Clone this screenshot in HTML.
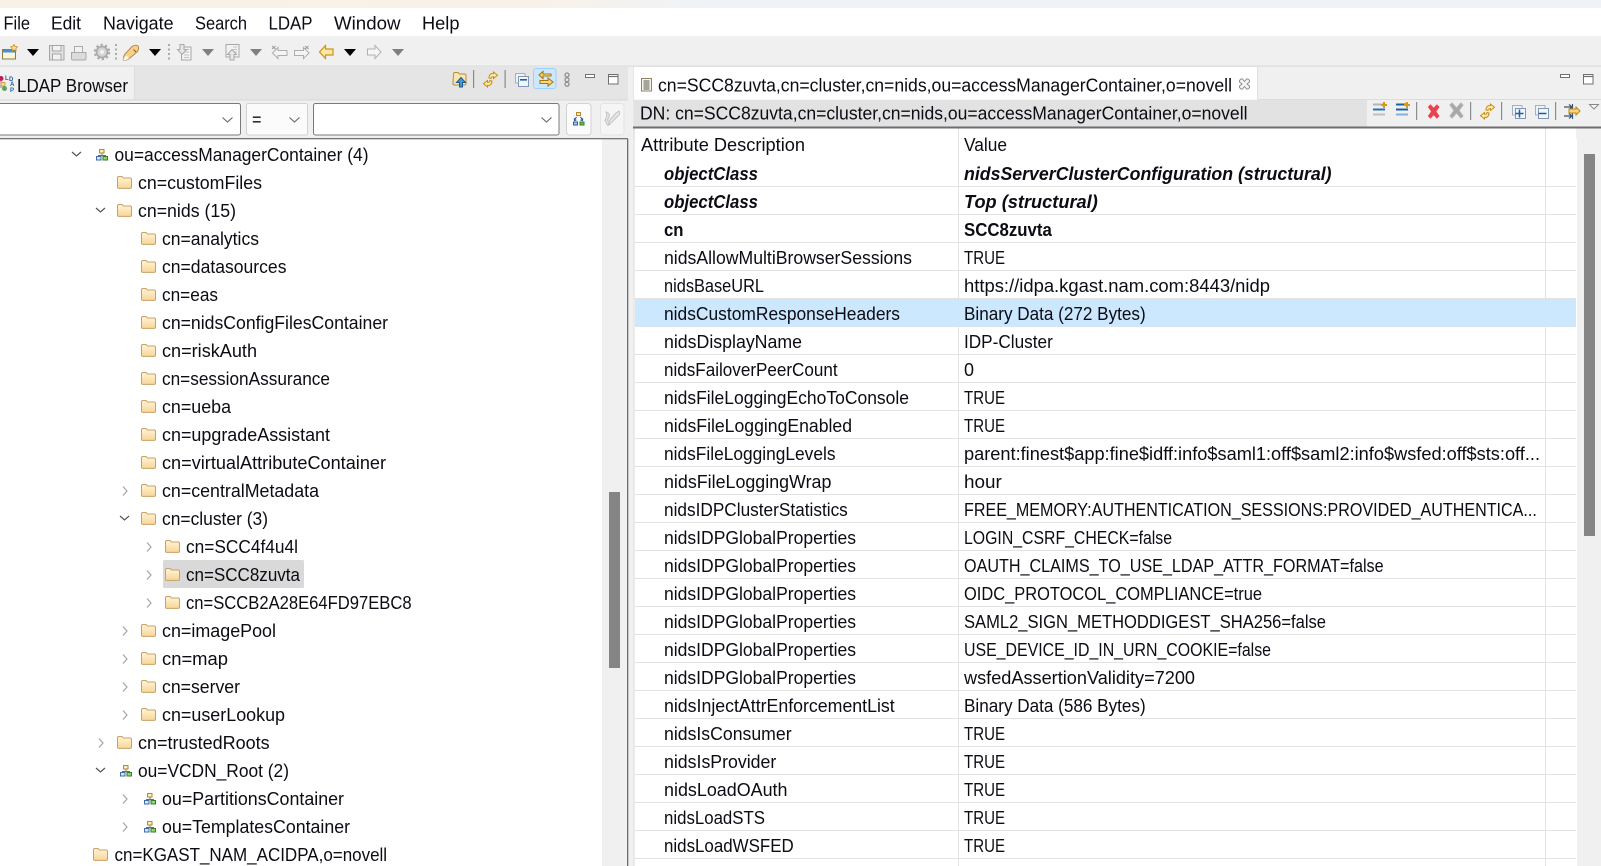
<!DOCTYPE html>
<html lang="en">
<head>
<meta charset="utf-8">
<title>LDAP Browser</title>
<style>
html,body{margin:0;padding:0;width:1601px;height:866px;overflow:hidden;background:#fff}
svg{display:block}
text{font-family:"Liberation Sans",sans-serif;font-size:18.5px;fill:#0c0c14;white-space:pre}
.b{font-weight:bold}
.bi{font-weight:bold;font-style:italic}
</style>
</head>
<body>
<svg xmlns="http://www.w3.org/2000/svg" width="1601" height="866" viewBox="0 0 1601 866">
<defs>
<linearGradient id="tg" x1="0" x2="1" y1="0" y2="0"><stop offset="0" stop-color="#faf1e6"/><stop offset=".33" stop-color="#f9f1e7"/><stop offset=".44" stop-color="#eff3f7"/><stop offset="1" stop-color="#eff3f7"/></linearGradient>
<linearGradient id="fg" x1="0" x2="0" y1="0" y2="1"><stop offset="0" stop-color="#fff6da"/><stop offset="1" stop-color="#f8d495"/></linearGradient>
<symbol id="f" width="15" height="13" viewBox="0 0 15 13" overflow="visible"><path d="M.5 2C.5 1 1 .5 1.800 .5H5l1.300 1.500h6.800c.8 0 1.400.6 1.400 1.400v7.700c0 .8-.6 1.300-1.400 1.300H1.900c-.8 0-1.400-.5-1.400-1.300z" fill="url(#fg)" stroke="#c9a066"/></symbol>
<symbol id="o" width="12" height="12" viewBox="0 0 12 12" overflow="visible"><path d="M6 4v2.500M2.500 8V6.500h7V8" fill="none" stroke="#6b6b6b"/><rect x="3.500" y=".5" width="4.500" height="3.500" fill="#fdf0c0" stroke="#b8862e"/><rect x=".5" y="7.500" width="4.500" height="3.500" fill="#dbe7f7" stroke="#3f6aa8"/><rect x="7" y="7.500" width="4.500" height="3.500" fill="#9ad468" stroke="#2f7f30"/></symbol>
<symbol id="cd" width="12" height="8" viewBox="0 0 12 8" overflow="visible"><path d="M1.500 2 6 6l4.500-4" fill="none" stroke="#555" stroke-width="1.200"/></symbol>
<symbol id="cr" width="8" height="12" viewBox="0 0 8 12" overflow="visible"><path d="M2 1.500 6 6l-4 4.500" fill="none" stroke="#a6a6a6" stroke-width="1.200"/></symbol>
<symbol id="cc" width="13" height="8" viewBox="0 0 13 8" overflow="visible"><path d="M1.500 1.500 6.500 6l5-4.500" fill="none" stroke="#666" stroke-width="1.100"/></symbol>
<symbol id="tb" width="12" height="7" viewBox="0 0 12 7"><path d="M0 0h12L6 7z" fill="#000"/></symbol>
<symbol id="tgy" width="12" height="7" viewBox="0 0 12 7"><path d="M0 0h12L6 7z" fill="#7f7f7f"/></symbol>
<symbol id="rf" width="16" height="16" viewBox="0 0 16 16" overflow="visible"><path d="M6.500 6.500C6.500 3 9 1.500 11 2V.5l4 3.300-4 3.200V5.300c-1.500-.3-2.300.3-2.500 1.700zM9.500 9.500C9.500 13 7 14.500 5 14v1.500L1 12.200 5 9v1.700c1.500.3 2.300-.3 2.500-1.700z" fill="#fde9a8" stroke="#c98c12"/></symbol>
<symbol id="ab" width="14" height="14" viewBox="0 0 14 14" overflow="visible"><rect x=".5" y=".5" width="9.500" height="9.500" fill="#eef3fa" stroke="#9fb2cc"/><rect x="3.500" y="3.500" width="10" height="10" fill="#f3f7fc" stroke="#7d97b8"/></symbol>
</defs>

<!-- backgrounds -->
<rect width="1601" height="8" fill="url(#tg)"/>
<rect y="8" width="1601" height="28" fill="#fff"/>
<rect y="36" width="1601" height="30" fill="#f0f0f0"/>
<rect y="66" width="1601" height="73" fill="#f0f0f0"/>
<rect y="65.500" width="1601" height="1.200" fill="#dcdcdc"/>
<!-- left view header -->
<rect x="134" y="67" width="494" height="33" fill="#e5e5e5"/>
<rect x="134" y="67" width="1" height="33" fill="#dcdcdc"/>
<rect y="99.500" width="628" height="1" fill="#d6d6d6"/>
<!-- combos -->
<rect x="-3" y="103.500" width="243.500" height="31.500" rx="2" fill="#fff" stroke="#7a7a7a"/>
<rect x="246.500" y="103.500" width="61" height="31.500" rx="2" fill="#fbfbfb" stroke="#d2d2d2"/>
<rect x="313.500" y="103.500" width="245.500" height="31.500" rx="2" fill="#fff" stroke="#7a7a7a"/>
<rect x="566.500" y="103.500" width="24.500" height="31.500" rx="3" fill="#fbfbfb" stroke="#d2d2d2"/>
<rect x="600.500" y="103.500" width="23.500" height="31.500" rx="3" fill="#f5f5f5" stroke="#e4e4e4"/>
<use href="#cc" x="221" y="116"/><use href="#cc" x="288" y="116"/><use href="#cc" x="540" y="116"/>
<text x="252" y="125.500" textLength="9.500" lengthAdjust="spacingAndGlyphs">=</text>
<!-- tree area -->
<rect y="138" width="628" height="1.400" fill="#777"/>
<rect y="139.400" width="602" height="727" fill="#fff"/>
<rect x="602" y="139.400" width="25" height="727" fill="#f0f0f0"/>
<rect x="609" y="492" width="11" height="176" fill="#858585"/>
<rect x="627" y="139" width="1.400" height="727" fill="#6e6e6e"/>
<rect x="628.400" y="139" width="5" height="727" fill="#f0f0f0"/>
<rect x="163" y="560" width="141" height="28" rx="1.500" fill="#d9d9d9"/>

<!-- menu -->
<text x="3.500" y="29.500" textLength="26.500" lengthAdjust="spacingAndGlyphs">File</text>
<text x="51" y="29.500" textLength="30" lengthAdjust="spacingAndGlyphs">Edit</text>
<text x="103" y="29.500" textLength="70.500" lengthAdjust="spacingAndGlyphs">Navigate</text>
<text x="195" y="29.500" textLength="52" lengthAdjust="spacingAndGlyphs">Search</text>
<text x="268.500" y="29.500" textLength="44" lengthAdjust="spacingAndGlyphs">LDAP</text>
<text x="334" y="29.500" textLength="66.500" lengthAdjust="spacingAndGlyphs">Window</text>
<text x="422" y="29.500" textLength="37.500" lengthAdjust="spacingAndGlyphs">Help</text>

<!-- main toolbar -->
<path d="M2.500 49.500h13v9.500h-13z" fill="#fbf7d8" stroke="#8a7a50"/><rect x="3" y="50" width="12" height="2.500" fill="#4a90d9"/><path d="M14 44.500l1.200 2 2.300.3-1.600 1.700.3 2.300-2.200-1-2.100 1 .3-2.300-1.600-1.700 2.300-.3z" fill="#fce28a" stroke="#c8901a" stroke-width=".8"/>
<use href="#tb" x="27" y="49"/>
<g fill="#e2e2e2" stroke="#a6a6a6"><path d="M49.500 45.500h14.500v14.500h-14.500z"/><path d="M52.500 45.500h8.500v5.500h-8.500zM52.500 54h8.500v6h-8.500z" fill="#f2f2f2"/></g>
<g fill="#dcdcdc" stroke="#aaa"><path d="M74.500 46.500h8v6h-8z" fill="#f2f2f2"/><path d="M71.500 52.500h14.500v6c0 1-.6 1.500-1.500 1.500h-11.500c-1 0-1.500-.5-1.500-1.500z"/></g>
<circle cx="102" cy="52" r="5.500" fill="#d4d4d4" stroke="#a8a8a8" stroke-width="1.600"/><circle cx="102" cy="52" r="7.200" fill="none" stroke="#a8a8a8" stroke-width="2" stroke-dasharray="2.300 2.300"/><circle cx="102" cy="52" r="2.200" fill="#f0f0f0"/>
<path d="M116 44v16" stroke="#999" stroke-width="1.600" stroke-dasharray="2 2.500"/>
<path d="M123.500 60.500c-.5-3 .5-5.500 2.500-7.500l6-6.500c2-1.500 4.500-1.500 6-.5 1 2 .5 4-.5 5.500l-7 6c-2 2-4.500 3-7 3z" fill="#f8d08a" stroke="#b08a50"/><path d="M123.500 60.500c0-2.500 1-4 3-5l2.500 2.500c-1.500 1.500-3 2.500-5.500 2.500z" fill="#fffbe6" stroke="#e8dcc0" stroke-width=".6"/><path d="M133.500 49.500l2.500 2.500" stroke="#8a5a1a"/>
<use href="#tb" x="149" y="49"/>
<path d="M169 44v16" stroke="#999" stroke-width="1.600" stroke-dasharray="2 2.500"/>
<path d="M181.500 47h9.500v13h-9.500z" fill="#f2f2f2" stroke="#a8a8a8"/><path d="M183 49.500h6M183 52h6M184 55h5M184 57.500h5" stroke="#c4c4c4"/><path d="M180 44.500h4v5h2.500l-4.500 5-4.500-5h2.500z" fill="#e8e8e8" stroke="#a8a8a8"/>
<use href="#tgy" x="202" y="49"/>
<path d="M226 44.500h13v12.500h-13z" fill="#f2f2f2" stroke="#a8a8a8"/><path d="M233 47h4M233 49.500h4M233 52h4" stroke="#c4c4c4"/><path d="M230 60v-5.500h-2.500l4.500-5 4.500 5h-2.500v5.500z" fill="#e8e8e8" stroke="#a8a8a8"/>
<use href="#tgy" x="250" y="49"/>
<path d="M287 50.500h-9v-3l-5.500 5.500 5.500 5.500v-3h9z" fill="#f4f4f4" stroke="#adadad"/><path d="M272 46l3.500 3M275.500 46l-3.500 3" stroke="#999"/>
<path d="M294.500 50.500h9v-3l5.500 5.500-5.500 5.500v-3h-9z" fill="#f4f4f4" stroke="#adadad"/><path d="M305 46l3.500 3M308.500 46l-3.500 3" stroke="#999"/>
<path d="M333 49h-7.500v-3.500l-6 6.500 6 6.500v-3.500h7.500z" fill="#fde9a6" stroke="#cf8f1a" stroke-width="1.200"/>
<use href="#tb" x="344" y="49"/>
<path d="M367.500 49h7.500v-3.500l6 6.500-6 6.500v-3.500h-7.500z" fill="#f6f6f6" stroke="#b0b0b0"/>
<use href="#tgy" x="392" y="49"/>

<!-- left tab -->
<g>
<circle cx="1" cy="78.500" r="2.500" fill="#c2185b"/><path d="M1 81v7M1 84.500h4" stroke="#888"/><rect x="1" y="82.500" width="4" height="3.500" fill="#fde08a" stroke="#b8862e" stroke-width=".7"/><circle cx="4.500" cy="88.500" r="2.500" fill="#5aa55a"/>
<text x="5" y="80" style="font-size:6px;font-weight:bold;fill:#1d5fa8">L</text><text x="9" y="81" style="font-size:6px;font-weight:bold;fill:#1d5fa8">D</text><text x="10" y="86" style="font-size:6px;font-weight:bold;fill:#1d5fa8">A</text><text x="10" y="92" style="font-size:6px;font-weight:bold;fill:#1d5fa8">P</text>
</g>
<text x="17" y="92" textLength="111" lengthAdjust="spacingAndGlyphs">LDAP Browser</text>

<!-- left view icons -->
<path d="M453.500 74c0-1 .5-1.500 1.500-1.500h3l1.500 1.500h5c1 0 1.500.5 1.500 1.500v8c0 1-.5 1.500-1.500 1.500h-10c-1 0-1.500-.5-1.500-1.500z" fill="#fbe4b0" stroke="#b88a3e"/><path d="M459.500 87v-4.500h-3l4.500-5 4.500 5h-3V87z" fill="#3f9ad6" stroke="#165c8f"/>
<rect x="473" y="70" width="1.200" height="18" fill="#8c8c8c"/>
<use href="#rf" x="482.500" y="71.500"/>
<rect x="504.500" y="70" width="1.200" height="18" fill="#8c8c8c"/>
<use href="#ab" x="515" y="73"/><path d="M520 79.800h7" stroke="#1f5f9e" stroke-width="1.600"/>
<rect x="533.500" y="68.500" width="22.500" height="20" rx="2.500" fill="#cce8ff" stroke="#99d1ff"/>
<path d="M551 74h-8v-2.500l-4 3.500 4 3.500v-2.500h8zM540 80.500h8v-2.500l5 4-5 4v-2.500h-8z" fill="#fdd97c" stroke="#a9770f" stroke-width="1.100"/>
<g fill="none" stroke="#8f8f8f" stroke-width="1.300"><circle cx="567" cy="75" r="2"/><circle cx="567" cy="79.700" r="2"/><circle cx="567" cy="84.200" r="2"/></g>
<rect x="585.500" y="74.500" width="9" height="3" fill="#fff" stroke="#707070"/>
<rect x="608.500" y="74.500" width="9.500" height="9.500" fill="#fff" stroke="#707070"/><path d="M608.500 76.500h9.500" stroke="#707070" stroke-width="1.200"/>
<!-- filter buttons -->
<g transform="translate(573,112)"><rect x="3.500" y=".5" width="4" height="3" fill="#fde8a0" stroke="#b8862e"/><rect x=".5" y="10" width="4" height="3" fill="#a9c8ec" stroke="#2f5f9e"/><rect x="7" y="10" width="4" height="3" fill="#6fc04a" stroke="#2f7f30"/><path d="M3.500 5 1.500 8M1.300 6.300 1.500 8.500 3.500 8M7.500 5 9.500 8M9.700 6.300 9.500 8.500 7.500 8" fill="none" stroke="#1f4f8e"/></g>
<g transform="translate(603,110)" fill="#e6e6e6" stroke="#c4c4c4"><path d="M3 2c2 0 3.500 2 3.500 4L4.500 10 7 14.500 4.500 15 2 10.500 4 6z"/><path d="M16 1c1 1.500 1 3-.5 4.500L9 12 5.500 15l1-4.500 6-7z"/></g>

<!-- right view -->
<rect x="633.400" y="66" width="1.200" height="800" fill="#e0e0e0"/>
<rect x="634" y="67" width="623" height="32.500" fill="#fff"/>
<rect x="1257" y="67" width="1" height="32.500" fill="#e0e0e0"/>
<rect x="1258" y="99" width="343" height="1" fill="#dcdcdc"/>
<path d="M641.500 78.500h10v12.500h-10z" fill="#f8f5e8" stroke="#8f8566"/><path d="M643.500 81h6M643.500 83h6M643.500 85h6M643.500 87h6M643.500 89h6" stroke="#555" stroke-width=".9"/>
<text x="658" y="91.500" textLength="574" lengthAdjust="spacingAndGlyphs">cn=SCC8zuvta,cn=cluster,cn=nids,ou=accessManagerContainer,o=novell</text>
<path d="M1239.500 80.500l1.500-1.500h1.500l2 2.500 2-2.500h1.500l1.500 1.500v1.500l-2.500 2 2.500 2v1.500l-1.500 1.500h-1.500l-2-2.500-2 2.500H1241l-1.500-1.500v-1.500l2.500-2-2.500-2z" fill="#f4f4f4" stroke="#8f8f8f"/>
<rect x="1560.500" y="74.500" width="9" height="3" fill="#fff" stroke="#707070"/>
<rect x="1583.500" y="74.500" width="9.500" height="9.500" fill="#fff" stroke="#707070"/><path d="M1583.500 76.500h9.500" stroke="#707070" stroke-width="1.200"/>

<rect x="634" y="100" width="733" height="27" fill="#e2e2e2"/>
<text x="640" y="119.500" textLength="607.500" lengthAdjust="spacingAndGlyphs">DN: cn=SCC8zuvta,cn=cluster,cn=nids,ou=accessManagerContainer,o=novell</text>
<rect x="633" y="126.500" width="968" height="2" fill="#6e6e6e"/>

<!-- DN toolbar -->
<g stroke-width="2"><path d="M1373 104.500h12" stroke="#b4b4b4"/><path d="M1373 109.500h12" stroke="#2a6fb0"/><path d="M1373 114.500h12" stroke="#c0c0c0"/></g>
<path d="M1384 102v6M1381 105h6" stroke="#d69a1a" stroke-width="2"/>
<g stroke-width="2"><path d="M1396 104.500h12M1396 109.500h12" stroke="#1f5f9e"/><path d="M1396 114.500h12" stroke="#7fb2dd"/></g>
<path d="M1407 102v6M1404 105h6" stroke="#d69a1a" stroke-width="2"/>
<rect x="1416" y="102" width="1.200" height="18" fill="#8c8c8c"/>
<path d="M1428.500 107l2-2 3.200 3.500 3.200-3.500 2 2-3.200 4.500 3.200 4.500-2 2-3.200-3.500-3.200 3.500-2-2 3.200-4.500z" fill="#e8434f" stroke="#e8434f"/>
<path d="M1450 105l2-2 4.500 5 4.500-5 2 2-4 5.500 4 5.500-2 2-4.500-5-4.500 5-2-2 4-5.500z" fill="#a8a8a8" stroke="#b4b4b4"/>
<rect x="1470" y="102" width="1.200" height="18" fill="#8c8c8c"/>
<use href="#rf" x="1479.500" y="103.500"/>
<rect x="1501" y="102" width="1.200" height="18" fill="#8c8c8c"/>
<use href="#ab" x="1512" y="105"/><path d="M1519.500 109.500v8M1515.500 113.500h8" stroke="#1f5f9e" stroke-width="1.500"/>
<use href="#ab" x="1535" y="105"/><path d="M1538.500 113.500h8" stroke="#1f5f9e" stroke-width="1.500"/>
<rect x="1555" y="102" width="1.200" height="18" fill="#8c8c8c"/>
<path d="M1564 107h8M1569 104.500l3 2.500-3 2.500M1572.500 104v6M1564 116h8M1569 113.500l3 2.500-3 2.500M1572.500 113v6" stroke="#3a5576" stroke-width="1.200" fill="none"/>
<path d="M1569 109h7v-2l4 4-4 4v-2h-7z" fill="#fcd676" stroke="#b8861a"/>
<path d="M1589.500 104.500h9l-4.500 4.500z" fill="#fff" stroke="#888"/>

<!-- table -->
<rect x="635" y="128.500" width="941" height="738" fill="#fff"/>
<rect x="1577" y="128.500" width="24" height="738" fill="#f0f0f0"/>
<rect x="1584" y="154" width="11" height="382" fill="#858585"/>
<g fill="#e3e3e3">
<rect x="635" y="186" width="941" height="1"/><rect x="635" y="214" width="941" height="1"/><rect x="635" y="242" width="941" height="1"/><rect x="635" y="270" width="941" height="1"/><rect x="635" y="298" width="941" height="1"/><rect x="635" y="326" width="941" height="1"/><rect x="635" y="354" width="941" height="1"/><rect x="635" y="382" width="941" height="1"/><rect x="635" y="410" width="941" height="1"/><rect x="635" y="438" width="941" height="1"/><rect x="635" y="466" width="941" height="1"/><rect x="635" y="494" width="941" height="1"/><rect x="635" y="522" width="941" height="1"/><rect x="635" y="550" width="941" height="1"/><rect x="635" y="578" width="941" height="1"/><rect x="635" y="606" width="941" height="1"/><rect x="635" y="634" width="941" height="1"/><rect x="635" y="662" width="941" height="1"/><rect x="635" y="690" width="941" height="1"/><rect x="635" y="718" width="941" height="1"/><rect x="635" y="746" width="941" height="1"/><rect x="635" y="774" width="941" height="1"/><rect x="635" y="802" width="941" height="1"/><rect x="635" y="830" width="941" height="1"/><rect x="635" y="858" width="941" height="1"/>
<rect x="958" y="128.500" width="1" height="738"/><rect x="1545" y="128.500" width="1" height="738"/>
</g>
<rect x="635" y="299" width="941" height="27.500" fill="#cce8ff"/>

<text x="641" y="151" textLength="164" lengthAdjust="spacingAndGlyphs">Attribute Description</text>
<text x="964" y="151" textLength="43" lengthAdjust="spacingAndGlyphs">Value</text>

<text class="bi" x="664" y="180" textLength="94" lengthAdjust="spacingAndGlyphs">objectClass</text>
<text class="bi" x="664" y="208" textLength="94" lengthAdjust="spacingAndGlyphs">objectClass</text>
<text class="b" x="664" y="236" textLength="19.500" lengthAdjust="spacingAndGlyphs">cn</text>
<text x="664" y="264" textLength="248" lengthAdjust="spacingAndGlyphs">nidsAllowMultiBrowserSessions</text>
<text x="664" y="292" textLength="100" lengthAdjust="spacingAndGlyphs">nidsBaseURL</text>
<text x="664" y="320" textLength="236" lengthAdjust="spacingAndGlyphs">nidsCustomResponseHeaders</text>
<text x="664" y="348" textLength="138" lengthAdjust="spacingAndGlyphs">nidsDisplayName</text>
<text x="664" y="376" textLength="173.600" lengthAdjust="spacingAndGlyphs">nidsFailoverPeerCount</text>
<text x="664" y="404" textLength="245" lengthAdjust="spacingAndGlyphs">nidsFileLoggingEchoToConsole</text>
<text x="664" y="432" textLength="188" lengthAdjust="spacingAndGlyphs">nidsFileLoggingEnabled</text>
<text x="664" y="460" textLength="171.500" lengthAdjust="spacingAndGlyphs">nidsFileLoggingLevels</text>
<text x="664" y="488" textLength="167.400" lengthAdjust="spacingAndGlyphs">nidsFileLoggingWrap</text>
<text x="664" y="516" textLength="183.800" lengthAdjust="spacingAndGlyphs">nidsIDPClusterStatistics</text>
<text x="664" y="544" textLength="192" lengthAdjust="spacingAndGlyphs">nidsIDPGlobalProperties</text>
<text x="664" y="572" textLength="192" lengthAdjust="spacingAndGlyphs">nidsIDPGlobalProperties</text>
<text x="664" y="600" textLength="192" lengthAdjust="spacingAndGlyphs">nidsIDPGlobalProperties</text>
<text x="664" y="628" textLength="192" lengthAdjust="spacingAndGlyphs">nidsIDPGlobalProperties</text>
<text x="664" y="656" textLength="192" lengthAdjust="spacingAndGlyphs">nidsIDPGlobalProperties</text>
<text x="664" y="684" textLength="192" lengthAdjust="spacingAndGlyphs">nidsIDPGlobalProperties</text>
<text x="664" y="712" textLength="230.700" lengthAdjust="spacingAndGlyphs">nidsInjectAttrEnforcementList</text>
<text x="664" y="740" textLength="127.600" lengthAdjust="spacingAndGlyphs">nidsIsConsumer</text>
<text x="664" y="768" textLength="112.300" lengthAdjust="spacingAndGlyphs">nidsIsProvider</text>
<text x="664" y="796" textLength="123.500" lengthAdjust="spacingAndGlyphs">nidsLoadOAuth</text>
<text x="664" y="824" textLength="101" lengthAdjust="spacingAndGlyphs">nidsLoadSTS</text>
<text x="664" y="852" textLength="129.700" lengthAdjust="spacingAndGlyphs">nidsLoadWSFED</text>

<text class="bi" x="964" y="180" textLength="367.600" lengthAdjust="spacingAndGlyphs">nidsServerClusterConfiguration (structural)</text>
<text class="bi" x="964" y="208" textLength="133.800" lengthAdjust="spacingAndGlyphs">Top (structural)</text>
<text class="b" x="964" y="236" textLength="87.800" lengthAdjust="spacingAndGlyphs">SCC8zuvta</text>
<text x="964" y="264" textLength="41" lengthAdjust="spacingAndGlyphs">TRUE</text>
<text x="964" y="292" textLength="306" lengthAdjust="spacingAndGlyphs">https://idpa.kgast.nam.com:8443/nidp</text>
<text x="964" y="320" textLength="181.700" lengthAdjust="spacingAndGlyphs">Binary Data (272 Bytes)</text>
<text x="964" y="348" textLength="88.800" lengthAdjust="spacingAndGlyphs">IDP-Cluster</text>
<text x="964" y="376" textLength="10" lengthAdjust="spacingAndGlyphs">0</text>
<text x="964" y="404" textLength="41" lengthAdjust="spacingAndGlyphs">TRUE</text>
<text x="964" y="432" textLength="41" lengthAdjust="spacingAndGlyphs">TRUE</text>
<text x="964" y="460" textLength="576" lengthAdjust="spacingAndGlyphs">parent:finest$app:fine$idff:info$saml1:off$saml2:info$wsfed:off$sts:off...</text>
<text x="964" y="488" textLength="37.800" lengthAdjust="spacingAndGlyphs">hour</text>
<text x="964" y="516" textLength="572.800" lengthAdjust="spacingAndGlyphs">FREE_MEMORY:AUTHENTICATION_SESSIONS:PROVIDED_AUTHENTICA...</text>
<text x="964" y="544" textLength="208" lengthAdjust="spacingAndGlyphs">LOGIN_CSRF_CHECK=false</text>
<text x="964" y="572" textLength="419.600" lengthAdjust="spacingAndGlyphs">OAUTH_CLAIMS_TO_USE_LDAP_ATTR_FORMAT=false</text>
<text x="964" y="600" textLength="298" lengthAdjust="spacingAndGlyphs">OIDC_PROTOCOL_COMPLIANCE=true</text>
<text x="964" y="628" textLength="362" lengthAdjust="spacingAndGlyphs">SAML2_SIGN_METHODDIGEST_SHA256=false</text>
<text x="964" y="656" textLength="307" lengthAdjust="spacingAndGlyphs">USE_DEVICE_ID_IN_URN_COOKIE=false</text>
<text x="964" y="684" textLength="231" lengthAdjust="spacingAndGlyphs">wsfedAssertionValidity=7200</text>
<text x="964" y="712" textLength="181.700" lengthAdjust="spacingAndGlyphs">Binary Data (586 Bytes)</text>
<text x="964" y="740" textLength="41" lengthAdjust="spacingAndGlyphs">TRUE</text>
<text x="964" y="768" textLength="41" lengthAdjust="spacingAndGlyphs">TRUE</text>
<text x="964" y="796" textLength="41" lengthAdjust="spacingAndGlyphs">TRUE</text>
<text x="964" y="824" textLength="41" lengthAdjust="spacingAndGlyphs">TRUE</text>
<text x="964" y="852" textLength="41" lengthAdjust="spacingAndGlyphs">TRUE</text>

<!-- tree -->
<g transform="translate(0,-.6)">
<text x="114.500" y="161.500" textLength="254" lengthAdjust="spacingAndGlyphs">ou=accessManagerContainer (4)</text>
<text x="138" y="189.500" textLength="124" lengthAdjust="spacingAndGlyphs">cn=customFiles</text>
<text x="138" y="217.500" textLength="98" lengthAdjust="spacingAndGlyphs">cn=nids (15)</text>
<text x="162" y="245.500" textLength="97" lengthAdjust="spacingAndGlyphs">cn=analytics</text>
<text x="162" y="273.500" textLength="124.500" lengthAdjust="spacingAndGlyphs">cn=datasources</text>
<text x="162" y="301.500" textLength="56" lengthAdjust="spacingAndGlyphs">cn=eas</text>
<text x="162" y="329.500" textLength="226" lengthAdjust="spacingAndGlyphs">cn=nidsConfigFilesContainer</text>
<text x="162" y="357.500" textLength="95" lengthAdjust="spacingAndGlyphs">cn=riskAuth</text>
<text x="162" y="385.500" textLength="168" lengthAdjust="spacingAndGlyphs">cn=sessionAssurance</text>
<text x="162" y="413.500" textLength="69" lengthAdjust="spacingAndGlyphs">cn=ueba</text>
<text x="162" y="441.500" textLength="168" lengthAdjust="spacingAndGlyphs">cn=upgradeAssistant</text>
<text x="162" y="469.500" textLength="224" lengthAdjust="spacingAndGlyphs">cn=virtualAttributeContainer</text>
<text x="162" y="497.500" textLength="157" lengthAdjust="spacingAndGlyphs">cn=centralMetadata</text>
<text x="162" y="525.500" textLength="106" lengthAdjust="spacingAndGlyphs">cn=cluster (3)</text>
<text x="186" y="553.500" textLength="112" lengthAdjust="spacingAndGlyphs">cn=SCC4f4u4l</text>
<text x="186" y="581.500" textLength="114" lengthAdjust="spacingAndGlyphs">cn=SCC8zuvta</text>
<text x="186" y="609.500" textLength="225.600" lengthAdjust="spacingAndGlyphs">cn=SCCB2A28E64FD97EBC8</text>
<text x="162" y="637.500" textLength="114" lengthAdjust="spacingAndGlyphs">cn=imagePool</text>
<text x="162" y="665.500" textLength="66" lengthAdjust="spacingAndGlyphs">cn=map</text>
<text x="162" y="693.500" textLength="78" lengthAdjust="spacingAndGlyphs">cn=server</text>
<text x="162" y="721.500" textLength="123" lengthAdjust="spacingAndGlyphs">cn=userLookup</text>
<text x="138" y="749.500" textLength="131.700" lengthAdjust="spacingAndGlyphs">cn=trustedRoots</text>
<text x="138" y="777.500" textLength="151" lengthAdjust="spacingAndGlyphs">ou=VCDN_Root (2)</text>
<text x="162" y="805.500" textLength="182" lengthAdjust="spacingAndGlyphs">ou=PartitionsContainer</text>
<text x="162" y="833.500" textLength="188" lengthAdjust="spacingAndGlyphs">ou=TemplatesContainer</text>
<text x="114.500" y="861.500" textLength="272.600" lengthAdjust="spacingAndGlyphs">cn=KGAST_NAM_ACIDPA,o=novell</text>
</g>

<use href="#o" x="96" y="149"/><use href="#o" x="120" y="765"/><use href="#o" x="144" y="793"/><use href="#o" x="144" y="821"/>
<use href="#f" x="117" y="176"/><use href="#f" x="117" y="204"/>
<use href="#f" x="141" y="232"/><use href="#f" x="141" y="260"/><use href="#f" x="141" y="288"/><use href="#f" x="141" y="316"/><use href="#f" x="141" y="344"/><use href="#f" x="141" y="372"/><use href="#f" x="141" y="400"/><use href="#f" x="141" y="428"/><use href="#f" x="141" y="456"/><use href="#f" x="141" y="484"/><use href="#f" x="141" y="512"/>
<use href="#f" x="165" y="540"/><use href="#f" x="165" y="568"/><use href="#f" x="165" y="596"/>
<use href="#f" x="141" y="624"/><use href="#f" x="141" y="652"/><use href="#f" x="141" y="680"/><use href="#f" x="141" y="708"/>
<use href="#f" x="117" y="736"/><use href="#f" x="93" y="848"/>
<use href="#cd" x="70.500" y="150"/><use href="#cd" x="94.500" y="206"/><use href="#cd" x="118.500" y="514"/><use href="#cd" x="94.500" y="766"/>
<use href="#cr" x="121" y="485"/><use href="#cr" x="145" y="541"/><use href="#cr" x="145" y="569"/><use href="#cr" x="145" y="597"/><use href="#cr" x="121" y="625"/><use href="#cr" x="121" y="653"/><use href="#cr" x="121" y="681"/><use href="#cr" x="121" y="709"/><use href="#cr" x="97" y="737"/><use href="#cr" x="121" y="793"/><use href="#cr" x="121" y="821"/>
</svg>
</body>
</html>
